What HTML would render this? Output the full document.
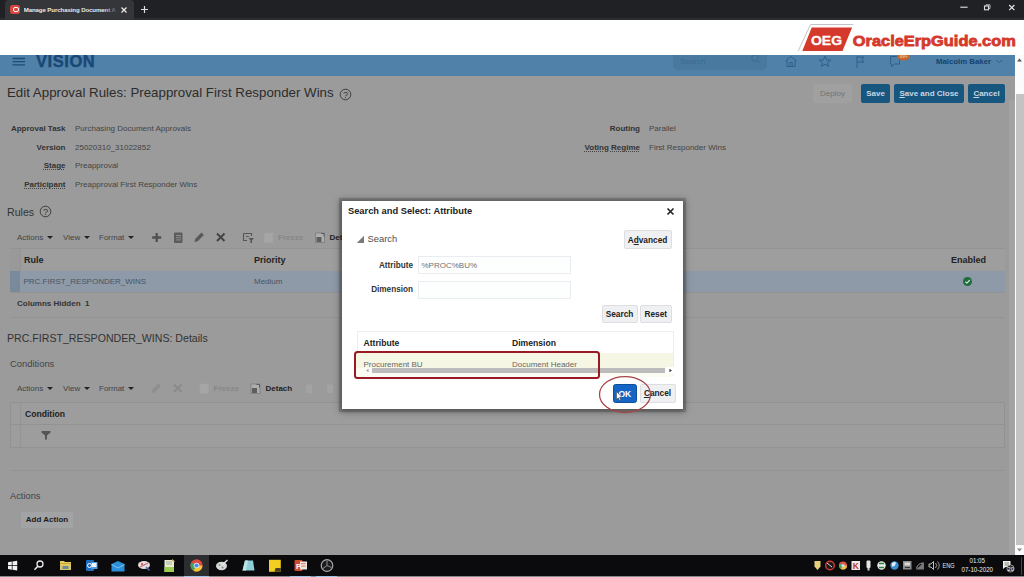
<!DOCTYPE html>
<html><head><meta charset="utf-8"><title>Manage Purchasing Document Approvals</title>
<style>
*{box-sizing:border-box;margin:0;padding:0}
html,body{width:1024px;height:577px;overflow:hidden;background:#9b9b9b;font-family:"Liberation Sans",sans-serif;}
.a{position:absolute;white-space:nowrap}
#chrome{left:0;top:0;width:1024px;height:20.300px;background:#202124}
#tab{left:5px;top:0;width:128.500px;height:20.300px;background:#35363a;border-radius:4px 4px 0 0}
#white{left:0;top:20px;width:1024px;height:35px;background:#fff}
#blue{left:0;top:55px;width:1015px;height:21.500px;background:#4f81a9}
#body{left:0;top:76px;width:1015px;height:479px;background:#9b9b9b}
#task{left:0;top:554.700px;width:1024px;height:22.300px;background:#0b0b0d}
#sb{left:1014.500px;top:55px;width:9.500px;height:500px;background:#fbfbfb}
#sbt{left:1016px;top:93.500px;width:8px;height:451px;background:#c3c3c3}
.t{color:#444;font-size:8px;line-height:10px}
.b{font-weight:bold}
.lbl{color:#333;font-size:8px;line-height:10px;font-weight:bold;text-align:right}
.btn{border-radius:2px;font-size:8px;font-weight:bold;line-height:19px;height:19px;text-align:center}
.bb{background:#17567f;color:#c9d6e2}
</style></head><body>
<div class="a" id="chrome"></div>
<div class="a" style="left:0;top:18px;width:1024px;height:2.300px;background:#2c2d30"></div><div class="a" id="tab"></div>
<div class="a" id="white"></div>
<div class="a" id="blue"></div>
<div class="a" id="body"></div>
<div class="a" style="left:1008.500px;top:100px;width:6px;height:455px;background:#a2a2a2"></div><div class="a" id="sb"></div><div class="a" id="sbt"></div>
<div class="a" id="task"></div>

<!-- chrome title bar -->
<div class="a" style="left:10.300px;top:4.700px;width:9.500px;height:9.500px;background:#d9463f;border-radius:2.500px"></div>
<div class="a" style="left:12.5px;top:7px;width:6px;height:5px;border:1.2px solid #fff;border-radius:2px"></div>
<div class="a" style="left:23.700px;top:5px;font-size:6.100px;line-height:9px;color:#e8e8e8;font-weight:bold;width:93px;overflow:hidden;letter-spacing:-0.1px">Manage Purchasing Document A</div>
<div class="a" style="left:104px;top:2px;width:14px;height:16px;background:linear-gradient(90deg,rgba(53,54,58,0),#35363a)"></div>
<svg class="a" style="left:120px;top:6px" width="8" height="8" viewBox="0 0 8 8"><path d="M1.5 1.5L6.5 6.5M6.5 1.5L1.5 6.5" stroke="#eee" stroke-width="1.2"/></svg>
<svg class="a" style="left:140px;top:5px" width="9" height="9" viewBox="0 0 9 9"><path d="M4.5 1V8M1 4.5H8" stroke="#ddd" stroke-width="1.2"/></svg>
<svg class="a" style="left:956px;top:2px" width="62" height="12" viewBox="0 0 62 12"><path d="M4.300 5.200H11.600" stroke="#e4e4e4" stroke-width="1.100"/><rect x="28.500" y="4" width="4" height="3.800" fill="none" stroke="#ddd" stroke-width="1.100"/><path d="M30 4V2.800H34V6.500H32.500" fill="none" stroke="#ccc" stroke-width="0.900"/><path d="M53.200 3L58.400 8.200M58.400 3L53.200 8.200" stroke="#e4e4e4" stroke-width="1.200"/></svg>

<!-- logo band -->
<svg class="a" style="left:790px;top:20px" width="234" height="35" viewBox="0 0 234 35">
<polygon points="21.700,7.600 62.100,7.600 52.500,31.100 12.300,31.100" fill="#d5392b"/>
<path d="M8.200 31L20.500 4.500H63.300" fill="none" stroke="#bdbdbd" stroke-width="0.9"/>
<text x="21" y="24.700" font-family="Liberation Sans, sans-serif" font-weight="bold" font-size="13.300" fill="#fff" stroke="#fff" stroke-width="0.300" textLength="31" lengthAdjust="spacingAndGlyphs">OEG</text>
<text x="62.800" y="26.400" font-family="Liberation Sans, sans-serif" font-weight="bold" font-size="15.400" fill="#d5392b" stroke="#d5392b" stroke-width="0.800" textLength="163" lengthAdjust="spacingAndGlyphs">OracleErpGuide.com</text>
</svg>

<!-- blue header -->
<div class="a" style="left:0;top:55px;width:1015px;height:21px;overflow:hidden">
<svg class="a" style="left:12px;top:2px" width="14" height="10" viewBox="0 0 14 10"><path d="M0.500 1.500H13M0.500 4.700H13M0.500 7.900H13" stroke="#1f4d78" stroke-width="1.300"/></svg>
<div class="a" style="left:36px;top:-5.200px;font-size:16.500px;line-height:22px;font-weight:bold;color:#1a4775;letter-spacing:0.55px;-webkit-text-stroke:0.35px #1a4775" id="vision">VISION</div>
<div class="a" style="left:673px;top:-4px;width:94px;height:19px;border-radius:5px;background:#49799f"></div>
<div class="a" style="left:680px;top:1.500px;font-size:8px;line-height:10px;color:#3a6b95">Search</div>
<svg class="a" style="left:750px;top:-2px" width="12" height="12" viewBox="0 0 12 12"><circle cx="5" cy="5" r="3.300" fill="none" stroke="#3a6b95" stroke-width="1"/><path d="M7.500 7.500L10.500 10.500" stroke="#3a6b95" stroke-width="1"/></svg>
<svg class="a" style="left:784px;top:0" width="14" height="13" viewBox="0 0 14 13"><path d="M1.500 6L7 1.500L12.500 6M3 5V11.500H11V5M5.800 11.500V7.500H8.200V11.500" fill="none" stroke="#2f5f8b" stroke-width="1"/></svg>
<svg class="a" style="left:818px;top:0" width="14" height="13" viewBox="0 0 14 13"><path d="M7 1.200L8.700 5H12.700L9.500 7.500L10.700 11.500L7 9.200L3.300 11.500L4.500 7.500L1.300 5H5.300Z" fill="none" stroke="#2f5f8b" stroke-width="1"/></svg>
<svg class="a" style="left:853px;top:0" width="14" height="14" viewBox="0 0 14 14"><path d="M4 1V13M4 2H11L9 4.500L11 7H4" fill="none" stroke="#2f5f8b" stroke-width="1"/></svg>
<svg class="a" style="left:888px;top:-3px" width="22" height="17" viewBox="0 0 22 17"><path d="M2.500 4.500H11.500V12H6.500L3.500 14.500V12H2.500Z" fill="none" stroke="#2f5f8b" stroke-width="1"/><ellipse cx="15.500" cy="4" rx="6.500" ry="4.500" fill="#c4652a"/><text x="11.500" y="6" font-family="Liberation Sans, sans-serif" font-size="5" font-weight="bold" fill="#eab88a">99+</text></svg>
<div class="a" style="left:936px;top:1.800px;font-size:7.800px;line-height:10px;font-weight:bold;color:#17426f">Malcolm Baker</div>
<svg class="a" style="left:995px;top:4px" width="9" height="6" viewBox="0 0 9 6"><path d="M1.500 1L4.300 3.800L7.100 1" fill="none" stroke="#2f5f8b" stroke-width="1"/></svg>
</div>
<svg class="a" style="left:1016px;top:57px" width="7" height="6" viewBox="0 0 7 6"><path d="M1 4.500L3.500 1.500L6 4.500Z" fill="#555"/></svg>
<svg class="a" style="left:1016px;top:547px" width="7" height="6" viewBox="0 0 7 6"><path d="M1 1.500L3.500 4.500L6 1.500Z" fill="#888"/></svg>

<!-- page title + buttons -->
<div class="a" style="left:7px;top:85px;font-size:13.300px;line-height:16px;color:#2c2c2c" id="title">Edit Approval Rules: Preapproval First Responder Wins</div>
<svg class="a" style="left:338.500px;top:88px" width="13" height="13" viewBox="0 0 13 13"><circle cx="6.500" cy="6.500" r="5.300" fill="none" stroke="#333" stroke-width="0.900"/><text x="3.900" y="9.800" font-family="Liberation Sans, sans-serif" font-size="9.200" fill="#333">?</text></svg>
<div class="a btn" style="left:813px;top:84px;width:39px;background:#a0a0a0;color:#747474;font-weight:normal">Deploy</div>
<div class="a btn bb" style="left:861px;top:84px;width:29px">Save</div>
<div class="a btn bb" style="left:894px;top:84px;width:70px"><u>S</u>ave and Close</div>
<div class="a btn bb" style="left:968px;top:84px;width:37px"><u>C</u>ancel</div>

<!-- form -->
<div class="a lbl" style="left:0;top:124px;width:65.500px">Approval Task</div><div class="a t" style="left:75px;top:124px">Purchasing Document Approvals</div>
<div class="a lbl" style="left:0;top:142.500px;width:65.500px">Version</div><div class="a t" style="left:75px;top:142.500px">25020310_31022852</div>
<div class="a lbl" style="left:0;top:161px;width:65.500px"><span style="text-decoration:underline dotted #444;text-decoration-thickness:0.8px;text-underline-offset:1.2px">Stage</span></div><div class="a t" style="left:75px;top:161px">Preapproval</div>
<div class="a lbl" style="left:0;top:180px;width:65.500px"><span style="text-decoration:underline dotted #444;text-decoration-thickness:0.8px;text-underline-offset:1.2px">Participant</span></div><div class="a t" style="left:75px;top:180px">Preapproval First Responder Wins</div>
<div class="a lbl" style="left:540px;top:124px;width:100px">Routing</div><div class="a t" style="left:649px;top:124px">Parallel</div>
<div class="a lbl" style="left:540px;top:142.500px;width:100px"><span style="text-decoration:underline dotted #444;text-decoration-thickness:0.8px;text-underline-offset:1.2px">Voting Regime</span></div><div class="a t" style="left:649px;top:142.500px">First Responder Wins</div>

<!-- rules -->
<div class="a" style="left:7px;top:205px;font-size:10.600px;line-height:14px;color:#333">Rules</div>
<svg class="a" style="left:38.500px;top:205px" width="13" height="13" viewBox="0 0 13 13"><circle cx="6.500" cy="6.500" r="5.300" fill="none" stroke="#333" stroke-width="0.900"/><text x="3.900" y="9.800" font-family="Liberation Sans, sans-serif" font-size="9.200" fill="#333">?</text></svg>
<div class="a t" style="left:17px;top:232.700px">Actions</div><div class="a" style="left:47px;top:236px;border:3px solid transparent;border-top:3.800px solid #222;width:0;height:0"></div>
<div class="a t" style="left:63px;top:232.700px">View</div><div class="a" style="left:84px;top:236px;border:3px solid transparent;border-top:3.800px solid #222;width:0;height:0"></div>
<div class="a t" style="left:99px;top:232.700px">Format</div><div class="a" style="left:128px;top:236px;border:3px solid transparent;border-top:3.800px solid #222;width:0;height:0"></div>

<!-- rules toolbar icons -->
<svg class="a" style="left:150px;top:230px" width="200" height="16" viewBox="0 0 200 16">
<path d="M6.700 3V12M2.200 7.500H11.200" stroke="#505050" stroke-width="2.300"/>
<rect x="24" y="2.500" width="8.500" height="10.500" rx="1" fill="#5c5c5c"/><path d="M26 5.500H31M26 7.700H31M26 9.900H31" stroke="#9b9b9b" stroke-width="0.800"/>
<path d="M44.500 12L45.300 8.800L51.500 2.600L53.900 5L47.700 11.200Z" fill="#5a5a5a"/>
<path d="M67 3.500L74.500 11M74.500 3.500L67 11" stroke="#444" stroke-width="2"/>
<path d="M93.500 3.500H101.500V6M93.500 3.500V10.500H97" fill="none" stroke="#555" stroke-width="1.100"/><path d="M96 6.500H99" stroke="#555" stroke-width="0.900"/><path d="M98.500 8H104L102 10.200V13H100.500V10.200Z" fill="#555"/>
<rect x="114.500" y="3" width="8.500" height="9.500" fill="#a6a6a6" stroke="#a2a2a2" stroke-width="0.600"/>
<text x="128" y="10.300" font-family="Liberation Sans, sans-serif" font-size="8" font-weight="bold" fill="#878787">Freeze</text>
<rect x="165.500" y="3" width="9" height="9.500" fill="#aeaeae" stroke="#7c7c7c" stroke-width="0.800"/><rect x="166.500" y="7" width="5" height="5" fill="#5e5e5e"/><path d="M171 3.500H174V6.500" fill="none" stroke="#555" stroke-width="0.900"/>
<text x="179.500" y="10.300" font-family="Liberation Sans, sans-serif" font-size="8" font-weight="bold" fill="#222">Detach</text>
</svg>

<!-- rules table -->
<div class="a" style="left:10px;top:248px;width:995px;height:23px;background:#9e9e9e;border-top:1px solid #939393"></div>
<div class="a" style="left:10px;top:271px;width:995px;height:21px;background:#8e9aa8"></div>
<div class="a" style="left:10px;top:271px;width:10px;height:21px;background:#798b9b"></div>
<div class="a" style="left:10px;top:292px;width:995px;height:1px;background:#939393"></div>
<div class="a" style="left:10px;top:317px;width:995px;height:1px;background:#939393"></div>
<div class="a" style="left:10px;top:249px;width:10.500px;height:22px;background:#999;border-right:1px solid #949494"></div><div class="a" style="left:24px;top:254.500px;font-size:9px;line-height:11px;font-weight:bold;color:#222">Rule</div>
<div class="a" style="left:254px;top:254.500px;font-size:9px;line-height:11px;font-weight:bold;color:#222">Priority</div>
<div class="a" style="left:951px;top:254.500px;font-size:9px;line-height:11px;font-weight:bold;color:#222">Enabled</div>
<div class="a t" style="left:23.500px;top:277px;color:#4a5560">PRC.FIRST_RESPONDER_WINS</div>
<div class="a t" style="left:254px;top:277px;color:#4a5560">Medium</div>
<svg class="a" style="left:962px;top:276px" width="11" height="11" viewBox="0 0 11 11"><circle cx="5.500" cy="5.500" r="4.500" fill="#1f6b3a"/><path d="M3.300 5.600L4.900 7.200L7.800 4" fill="none" stroke="#cfe0d4" stroke-width="1.200"/></svg>
<div class="a t b" style="left:17px;top:299px;color:#333">Columns Hidden &nbsp;1</div>

<!-- details -->
<div class="a" style="left:7px;top:331px;font-size:10.600px;line-height:14px;color:#333">PRC.FIRST_RESPONDER_WINS: Details</div>
<div class="a" style="left:10px;top:358px;font-size:9.400px;line-height:12px;color:#444">Conditions</div>
<div class="a t" style="left:17px;top:383.500px">Actions</div><div class="a" style="left:47px;top:387px;border:3px solid transparent;border-top:3.800px solid #222;width:0;height:0"></div>
<div class="a t" style="left:63px;top:383.500px">View</div><div class="a" style="left:84px;top:387px;border:3px solid transparent;border-top:3.800px solid #222;width:0;height:0"></div>
<div class="a t" style="left:99px;top:383.500px">Format</div><div class="a" style="left:128px;top:387px;border:3px solid transparent;border-top:3.800px solid #222;width:0;height:0"></div>

<!-- conditions toolbar icons -->
<svg class="a" style="left:150px;top:381px" width="200" height="16" viewBox="0 0 200 16">
<path d="M1.500 12L2.300 8.800L8.500 2.600L10.900 5L4.700 11.200Z" fill="#8e8e8e"/>
<path d="M24 3.500L31.500 11M31.500 3.500L24 11" stroke="#8a8a8a" stroke-width="2"/>
<rect x="50" y="3" width="8.500" height="9.500" fill="#a6a6a6" stroke="#a2a2a2" stroke-width="0.600"/>
<text x="63.500" y="10.300" font-family="Liberation Sans, sans-serif" font-size="8" font-weight="bold" fill="#878787">Freeze</text>
<rect x="101" y="3" width="9" height="9.500" fill="#aeaeae" stroke="#7c7c7c" stroke-width="0.800"/><rect x="102" y="7" width="5" height="5" fill="#5e5e5e"/><path d="M106.500 3.500H109.500V6.500" fill="none" stroke="#555" stroke-width="0.900"/>
<text x="115.500" y="10.300" font-family="Liberation Sans, sans-serif" font-size="8" font-weight="bold" fill="#222">Detach</text>
<rect x="156" y="3.500" width="6" height="8.500" fill="#a3a3a3"/><rect x="177" y="3.500" width="6" height="8.500" fill="#a3a3a3"/>
</svg>

<!-- conditions table -->
<div class="a" style="left:10px;top:402px;width:995px;height:46px;background:#9d9d9d;border:1px solid #929292"></div>
<div class="a" style="left:10px;top:424px;width:995px;height:1px;background:#929292"></div>
<div class="a" style="left:20px;top:402px;width:1px;height:46px;background:#949494"></div>
<div class="a" style="left:25px;top:408.500px;font-size:8.600px;line-height:11px;font-weight:bold;color:#222">Condition</div>
<svg class="a" style="left:41px;top:430px" width="10" height="10" viewBox="0 0 10 10"><path d="M0.500 1H9.500V2.500L6 5.500V9.500H4V5.500L0.500 2.500Z" fill="#555"/></svg>
<div class="a" style="left:10px;top:470px;width:995px;height:1px;background:#939393"></div>

<!-- actions -->
<div class="a" style="left:10px;top:490px;font-size:9.300px;line-height:12px;color:#444">Actions</div>
<div class="a btn" style="left:20px;top:510.500px;width:54px;height:18.500px;line-height:16.500px;background:#a2a3a5;border:1px solid #9a9b9d;color:#1c1c1c">Add Action</div>

<!-- modal -->
<div class="a" style="left:341.500px;top:200.500px;width:341.700px;height:208.700px;background:#fff;box-shadow:0 0 1px 3px rgba(0,0,0,0.16),0 1px 6px 2px rgba(40,40,40,0.5)"></div>
<div class="a" style="left:348px;top:205px;font-size:9.300px;line-height:12px;font-weight:bold;color:#222" id="mtitle">Search and Select: Attribute</div>
<svg class="a" style="left:666px;top:207px" width="9" height="9" viewBox="0 0 9 9"><path d="M1.500 1.500L7.500 7.500M7.500 1.500L1.500 7.500" stroke="#222" stroke-width="1.600"/></svg>
<svg class="a" style="left:355.500px;top:234.500px" width="9" height="9" viewBox="0 0 9 9"><path d="M8 0.800V8H0.800Z" fill="#7a7a7a"/></svg>
<div class="a" style="left:367.500px;top:231.500px;font-size:9.400px;line-height:13px;color:#505050" id="msearch">Search</div>
<div class="a btn" style="left:623.500px;top:230px;width:48px;height:19px;line-height:18px;background:#eff0f2;border:1px solid #dcdee1;color:#222;font-size:8.300px">A<u>d</u>vanced</div>
<div class="a lbl" style="left:350px;top:260.500px;width:63px;font-size:8.200px">Attribute</div>
<div class="a" style="left:417.500px;top:255.500px;width:153px;height:18px;border:1px solid #e9ecf0;background:#fdfefe"></div>
<div class="a t" style="left:421.500px;top:260.500px;color:#707070;font-size:8px">%PROC%BU%</div>
<div class="a lbl" style="left:350px;top:285px;width:63px;font-size:8.200px">Dimension</div>
<div class="a" style="left:417.500px;top:280.500px;width:153px;height:18px;border:1px solid #e9ecf0;background:#fdfefe"></div>
<div class="a btn" style="left:601.500px;top:304.500px;width:36px;height:18.500px;line-height:17px;background:#eff0f2;border:1px solid #dcdee1;color:#222;font-size:8.300px">Search</div>
<div class="a btn" style="left:640px;top:304.500px;width:31.500px;height:18.500px;line-height:17px;background:#eff0f2;border:1px solid #dcdee1;color:#222;font-size:8.300px">Reset</div>
<!-- results table -->
<div class="a" style="left:357px;top:330.500px;width:317px;height:45px;border:1px solid #ebedef;background:#fff"></div>
<div class="a" style="left:363.500px;top:337.500px;font-size:8.600px;line-height:11px;font-weight:bold;color:#222">Attribute</div>
<div class="a" style="left:512px;top:337.500px;font-size:8.600px;line-height:11px;font-weight:bold;color:#222">Dimension</div>
<div class="a" style="left:355px;top:352.500px;width:318px;height:15.500px;background:#f6f6e4"></div>
<div class="a" style="left:355px;top:368px;width:318px;height:9px;background:#fbfaf3"></div>
<div class="a t" style="left:363.500px;top:359.700px;color:#666;font-size:8px">Procurement BU</div>
<div class="a t" style="left:512px;top:359.700px;color:#666;font-size:8px">Document Header</div>
<div class="a" style="left:372px;top:367.500px;width:293px;height:5px;background:#bcbcbc"></div>
<div class="a" style="left:666px;top:366.500px;width:8px;height:7px;background:#fff"></div>
<svg class="a" style="left:668px;top:367.500px" width="5" height="5" viewBox="0 0 5 5"><path d="M1.500 0.800L3.800 2.500L1.500 4.200Z" fill="#222"/></svg>
<svg class="a" style="left:365px;top:367.500px" width="5" height="5" viewBox="0 0 5 5"><path d="M3.500 0.800L1.200 2.500L3.500 4.200Z" fill="#9a9ab0"/></svg>
<div class="a" style="left:354px;top:351px;width:245.500px;height:27.500px;border:2px solid #991a23;border-radius:3.500px"></div>
<!-- ok / cancel -->
<div class="a btn" style="left:613px;top:384px;width:23.500px;height:18.500px;line-height:18px;background:#1566c4;border:1px solid #0e4f9c;color:#fff;font-size:8.500px;border-radius:2.500px">OK</div>
<div class="a btn" style="left:639.500px;top:384px;width:36px;height:18.500px;line-height:17.500px;background:#eff0f2;border:1px solid #dcdee1;color:#222;font-size:8.300px"><u>C</u>ancel</div>
<svg class="a" style="left:590px;top:370px" width="70" height="50" viewBox="0 0 70 50"><ellipse cx="35" cy="24.500" rx="25.500" ry="18" fill="none" stroke="#a64448" stroke-width="1.250"/>
<path d="M26.500 21.500V29.500L28.300 27.800L29.600 30.600L30.800 30L29.600 27.300H32Z" fill="#fff" stroke="#333" stroke-width="0.500"/></svg>

<!-- taskbar -->
<div class="a" style="left:0;top:576.200px;width:1024px;height:0.800px;background:#8a8a8a"></div>
<div class="a" style="left:184px;top:555px;width:25px;height:22px;background:#2c2d31"></div>
<div class="a" style="left:184px;top:575.500px;width:25px;height:1.500px;background:#9cc7e6"></div>
<div class="a" style="left:290px;top:575.500px;width:21px;height:1.500px;background:#9cc7e6"></div>
<div class="a" style="left:316px;top:575.500px;width:21px;height:1.500px;background:#9cc7e6"></div>
<svg class="a" style="left:0;top:555px" width="350" height="22" viewBox="0 0 350 22">
<!-- windows -->
<path d="M8 7.200L11.800 6.600V10.300H8ZM12.500 6.500L17.200 5.800V10.300H12.500ZM8 11H11.800V14.700L8 14.100ZM12.500 11H17.200V15.500L12.500 14.800Z" fill="#f2f2f2"/>
<!-- search -->
<circle cx="40" cy="9" r="3" fill="none" stroke="#e8e8e8" stroke-width="1.300"/><path d="M37.800 11.200L34.500 14.700" stroke="#e8e8e8" stroke-width="1.500"/>
<!-- folder -->
<path d="M60 6H64L65 7H71V15H60Z" fill="#e6c75c"/><rect x="60" y="10.500" width="11" height="4.500" fill="#d9c46a"/><rect x="62.500" y="11" width="6" height="3" fill="#6a8a9a"/><rect x="60" y="8" width="11" height="1" fill="#c9a83c"/>
<!-- outlook -->
<rect x="86" y="5" width="8" height="11" rx="1" fill="#1d6dc0"/><rect x="91" y="7" width="6.500" height="7" fill="#4b9ae0"/><rect x="92" y="8" width="4.500" height="4" fill="#eef4fb"/><circle cx="89.500" cy="10.500" r="2" fill="none" stroke="#fff" stroke-width="1"/>
<!-- mail -->
<path d="M111.500 9L118 6L124.500 9V16.500H111.500Z" fill="#2a8fd8"/><path d="M111.500 9.500L118 13L124.500 9.500" fill="none" stroke="#7cc3f2" stroke-width="1"/>
<!-- paint-like -->
<ellipse cx="144" cy="10" rx="6" ry="4" fill="#e9dde0"/><path d="M140 12L148 8" stroke="#c26a72" stroke-width="1.200"/><path d="M146 12L149.500 15.500" stroke="#4a6fb0" stroke-width="1.500"/><circle cx="142" cy="9" r="1" fill="#b44"/>
<!-- notepad -->
<rect x="164.500" y="5" width="9.500" height="12" fill="#e8ecd5"/><rect x="164.500" y="12" width="9.500" height="5" fill="#9ccc50"/><path d="M166 7H172M166 9H172" stroke="#9aa58a" stroke-width="0.800"/><path d="M172 4.500L174.500 7" stroke="#c9a060" stroke-width="1.200"/>
<!-- chrome -->
<circle cx="196.500" cy="10.500" r="6" fill="#dd4b3e"/><path d="M196.500 10.500L191.300 7.500A6 6 0 0 0 193.500 15.700Z" fill="#3aa757"/><path d="M196.500 10.500L193.500 15.700A6 6 0 0 0 202.500 10.500Z" fill="#f5c431"/><path d="M191.300 7.500A6 6 0 0 1 202.300 9L196.500 9Z" fill="#dd4b3e"/><circle cx="196.500" cy="10.500" r="2.800" fill="#f1f1f1"/><circle cx="196.500" cy="10.500" r="2.100" fill="#4a8af4"/>
<!-- paint 2 -->
<ellipse cx="221.500" cy="11" rx="5.500" ry="4.200" fill="#d6d9d6"/><path d="M222 10L227.500 5" stroke="#e8e8e8" stroke-width="1.400"/><circle cx="219.500" cy="10" r="1" fill="#6a8"/><circle cx="222.500" cy="12.500" r="1" fill="#888"/>
<!-- light blue doc -->
<path d="M245 5.500H253L254.500 15.500H242.500Z" fill="#8ecfd6"/><path d="M245 5.500H248L246 15.500H242.500Z" fill="#b9e4e8"/>
<!-- sticky -->
<rect x="269" y="4.800" width="11.800" height="12" fill="#f1ce1f"/><path d="M275.500 13H280.800V16.800H274.500Z" fill="#4a4020"/>
<!-- powerpoint -->
<rect x="294.500" y="5" width="8" height="11" rx="1" fill="#d14a2b"/><rect x="300" y="6.500" width="7" height="8" fill="#f0e4df"/><text x="296" y="13.500" font-family="Liberation Sans, sans-serif" font-size="7.500" font-weight="bold" fill="#fff">P</text><rect x="301" y="8" width="4.500" height="1.200" fill="#d98a78"/><rect x="301" y="10.500" width="4.500" height="1.200" fill="#d98a78"/>
<!-- obs -->
<circle cx="327" cy="10.500" r="5.800" fill="#1c1c1f" stroke="#a8a8a8" stroke-width="1.200"/><path d="M327 10.500V5.500M327 10.500L323 13.500M327 10.500L331.500 12.500" stroke="#8a8a8a" stroke-width="1"/>
</svg>
<svg class="a" style="left:800px;top:555px" width="224" height="22" viewBox="0 0 224 22">
<path d="M14.500 6H20.500V11.500L17.500 15L14.500 11.500Z" fill="#e8cf7a"/>
<circle cx="30" cy="10.500" r="4.300" fill="#1a1a1a" stroke="#d23a32" stroke-width="1.400"/><path d="M27 8L32 12" stroke="#d8d8d8" stroke-width="1"/>
<circle cx="43" cy="10.500" r="4" fill="#d8564a"/><path d="M43 10.500L39.500 8.500A4 4 0 0 0 41 14Z" fill="#4aa860"/><path d="M43 10.500L41 14A4 4 0 0 0 47 10.500Z" fill="#ecc548"/><circle cx="43" cy="10.500" r="1.600" fill="#cfd8e8"/>
<rect x="51.500" y="6" width="8.500" height="9" fill="#f1e9e6"/><text x="52.800" y="13.800" font-family="Liberation Sans, sans-serif" font-size="8.500" font-weight="bold" fill="#c0392b">K</text>
<rect x="66.500" y="5.500" width="4" height="7.500" rx="1" fill="#e6e6e6"/><rect x="67.500" y="13" width="2" height="2.500" fill="#cfcfcf"/>
<circle cx="81.500" cy="10.500" r="4.200" fill="#e8efe8"/><path d="M79 8.500H84M79 12.500H84" stroke="#2e7d4a" stroke-width="1.600"/>
<circle cx="94.500" cy="10.500" r="4.200" fill="#3a8ecf"/><path d="M91.500 9A3 3 0 0 1 96 7.500L95 10.500L92.500 12Z" fill="#dfeefa"/>
<rect x="103" y="6" width="8.500" height="8.500" fill="#8c8c8c"/><rect x="104.500" y="7.500" width="5.500" height="3" fill="#d8d8d8"/><path d="M105 12.500H110" stroke="#333" stroke-width="1"/>
<path d="M116 14.500L124 14.500L124 7Z" fill="#777"/><path d="M116.500 13.500A7 7 0 0 1 123 8" fill="none" stroke="#aaa" stroke-width="0.900"/>
<path d="M129 9H131L133.500 6.500V14.500L131 12H129Z" fill="none" stroke="#d0d0d0" stroke-width="0.900"/><path d="M135.500 8A3.500 3.500 0 0 1 135.500 13M137.500 6.500A5.500 5.500 0 0 1 137.500 14.500" fill="none" stroke="#bdbdbd" stroke-width="0.800"/>
<text x="142.500" y="13" font-family="Liberation Sans, sans-serif" font-size="6.800" fill="#e8e8e8" textLength="12" lengthAdjust="spacingAndGlyphs">ENG</text>
<text x="169.500" y="8.300" font-family="Liberation Sans, sans-serif" font-size="6.800" fill="#ececec" textLength="15.500" lengthAdjust="spacingAndGlyphs">01:05</text>
<text x="161.500" y="17.300" font-family="Liberation Sans, sans-serif" font-size="6.800" fill="#ececec" textLength="31.500" lengthAdjust="spacingAndGlyphs">07-10-2020</text>
<path d="M203 6H210.500V12H205.500L203 14Z" fill="#f0f0f0"/><path d="M204.500 8H209M204.500 10H209" stroke="#555" stroke-width="0.700"/>
<circle cx="210.500" cy="13.500" r="3.600" fill="#2a2a2a" stroke="#bdbdbd" stroke-width="0.700"/><text x="207.600" y="15.800" font-family="Liberation Sans, sans-serif" font-size="5.500" fill="#fff">20</text>
<path d="M221.500 2V20" stroke="#555" stroke-width="0.800"/>
</svg>
</body></html>
